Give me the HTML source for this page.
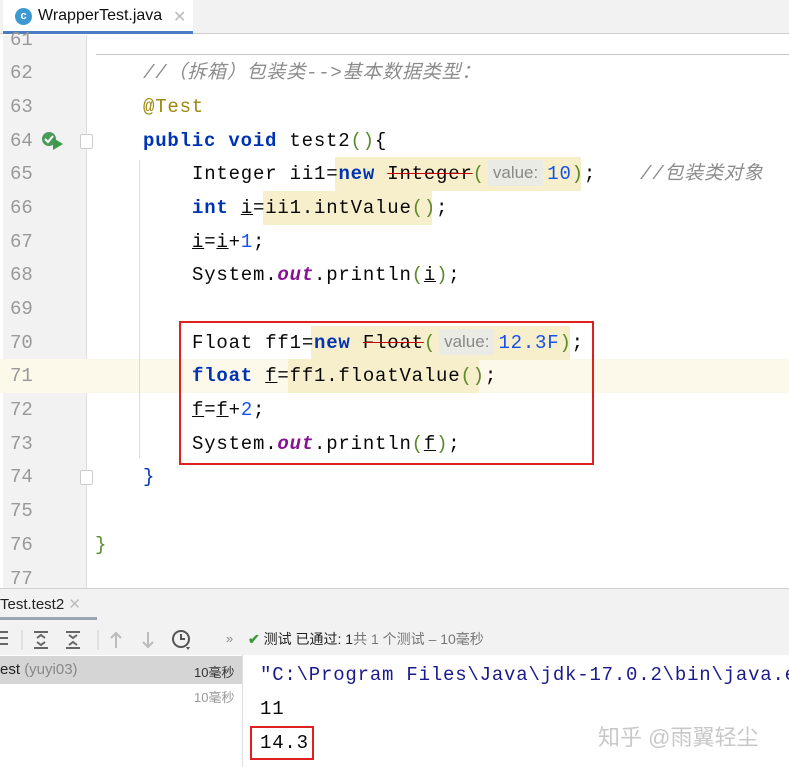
<!DOCTYPE html>
<html><head><meta charset="utf-8"><style>
*{margin:0;padding:0;box-sizing:border-box}
body{width:789px;height:767px;overflow:hidden;background:#fff;position:relative;font-family:"Liberation Sans","Noto Sans CJK SC",sans-serif}
.abs{position:absolute}
.m{font-family:"Liberation Mono","Noto Sans CJK SC",monospace;font-size:19px;letter-spacing:0.8px;white-space:pre;color:#080808}
.ln{position:absolute;left:10px;width:24px;font-family:"Liberation Mono",monospace;font-size:19px;color:#999;line-height:34px}
.code{position:absolute;line-height:34px}
.kw{color:#0033b3;font-weight:bold}
.num{color:#1750eb}
.par{color:#5b8a2a}
.it{color:#871094;font-style:italic;font-weight:bold}
.cm{color:#8c8c8c;font-style:italic}
.ann{color:#9e880d}
.u{text-decoration:underline}
.st{text-decoration:line-through;text-decoration-color:#c00}
.hint{display:inline-block;background:#ebebe5;color:#888;font-family:"Liberation Sans",sans-serif;font-size:17px;letter-spacing:0;padding:0 5px;margin:0 4px 0 3px;line-height:26px;vertical-align:1px}
.hl{position:absolute;background:#f7efcc;height:34px}
</style></head><body>
<div class="abs" style="left:0;top:0;width:789px;height:34px;background:#f2f2f2;border-bottom:1px solid #d0d0d0"></div>
<div class="abs" style="left:3px;top:0;width:190px;height:34px;background:#fff"></div>
<div class="abs" style="left:3px;top:31px;width:190px;height:3px;background:#4a7dbf"></div>
<div class="abs" style="left:15px;top:8px;width:17px;height:17px;border-radius:50%;background:#3d9ad1;color:#fff;font-size:11px;text-align:center;line-height:17px;font-weight:bold">c</div>
<div class="abs" style="left:38px;top:7px;font-size:16px;color:#111">WrapperTest.java</div>
<div class="abs" style="left:173px;top:7px;font-size:16px;color:#bbb">✕</div>
<div class="abs" style="left:3px;top:35px;width:84px;height:553px;background:#f2f2f2;border-right:1px solid #ddd"></div>
<div class="abs" style="left:0;top:359px;width:789px;height:34px;background:#fcf9ea"></div>
<div class="abs" style="left:96px;top:54px;width:693px;height:1px;background:#c8c8c8"></div>
<div class="abs" style="left:139px;top:160px;width:1px;height:298px;background:#ddd"></div>
<div class="abs" style="left:80px;top:134px;width:13px;height:15px;border:1px solid #ccc;border-radius:2px;background:#fff"></div>
<div class="abs" style="left:80px;top:470px;width:13px;height:15px;border:1px solid #ccc;border-radius:2px;background:#fff"></div>
<svg class="abs" style="left:40px;top:130px" width="26" height="22"><circle cx="9" cy="9" r="7" fill="#4a9a5a"/><path d="M5 9l3 3 5-6" stroke="#fff" stroke-width="2" fill="none"/><path d="M13 8l10 6-10 6z" fill="#3a9a4a"/></svg>
<div class="ln" style="top:23px">61</div>
<div class="ln" style="top:56px">62</div>
<div class="ln" style="top:90px">63</div>
<div class="ln" style="top:124px">64</div>
<div class="ln" style="top:157px">65</div>
<div class="ln" style="top:191px">66</div>
<div class="ln" style="top:225px">67</div>
<div class="ln" style="top:258px">68</div>
<div class="ln" style="top:292px">69</div>
<div class="ln" style="top:326px">70</div>
<div class="ln" style="top:359px">71</div>
<div class="ln" style="top:393px">72</div>
<div class="ln" style="top:427px">73</div>
<div class="ln" style="top:460px">74</div>
<div class="ln" style="top:494px">75</div>
<div class="ln" style="top:528px">76</div>
<div class="ln" style="top:562px">77</div>
<div class="hl" style="left:335px;top:157px;width:246px"></div>
<div class="hl" style="left:263px;top:191px;width:169px"></div>
<div class="hl" style="left:311px;top:326px;width:259px"></div>
<div class="hl" style="left:288px;top:359px;width:191px"></div>
<div class="code m" style="left:143px;top:56px"><span class="cm">//（拆箱）包装类--&gt;基本数据类型：</span></div>
<div class="code m ann" style="left:143px;top:90px">@Test</div>
<div class="code m" style="left:143px;top:124px"><span class="kw">public void</span> test2<span class="par">()</span>{</div>
<div class="code m" style="left:192px;top:157px">Integer ii1=<span class="kw">new</span> <span class="st">Integer</span><span class="par">(</span><span class="hint">value:</span><span class="num">10</span><span class="par">)</span>;</div>
<div class="code m" style="left:640px;top:157px"><span class="cm">//包装类对象</span></div>
<div class="code m" style="left:192px;top:191px"><span class="kw">int</span> <span class="u">i</span>=ii1.intValue<span class="par">()</span>;</div>
<div class="code m" style="left:192px;top:225px"><span class="u">i</span>=<span class="u">i</span>+<span class="num">1</span>;</div>
<div class="code m" style="left:192px;top:258px">System.<span class="it">out</span>.println<span class="par">(</span><span class="u">i</span><span class="par">)</span>;</div>
<div class="code m" style="left:192px;top:326px">Float ff1=<span class="kw">new</span> <span class="st">Float</span><span class="par">(</span><span class="hint">value:</span><span class="num">12.3F</span><span class="par">)</span>;</div>
<div class="code m" style="left:192px;top:359px"><span class="kw">float</span> <span class="u">f</span>=ff1.floatValue<span class="par">()</span>;</div>
<div class="code m" style="left:192px;top:393px"><span class="u">f</span>=<span class="u">f</span>+<span class="num">2</span>;</div>
<div class="code m" style="left:192px;top:427px">System.<span class="it">out</span>.println<span class="par">(</span><span class="u">f</span><span class="par">)</span>;</div>
<div class="code m" style="left:143px;top:460px;color:#0033b3">}</div>
<div class="code m" style="left:95px;top:528px;color:#5b8a2a">}</div>
<div class="abs" style="left:179px;top:321px;width:415px;height:144px;border:2px solid #e02020"></div>
<div class="abs" style="left:0;top:588px;width:789px;height:67px;background:#f2f2f2;border-top:1px solid #d0d0d0"></div>
<div class="abs" style="left:0;top:595px;font-size:15px;color:#222">Test.test2 <span style="color:#bbb">✕</span></div>
<div class="abs" style="left:0;top:617px;width:97px;height:3px;background:#9aa4b2"></div>
<svg class="abs" style="left:0;top:628px" width="200" height="24">
<path d="M0 4h8M0 10h8M0 16h8" stroke="#666" stroke-width="2"/>
<line x1="22" y1="2" x2="22" y2="22" stroke="#ccc"/>
<path d="M34 4h14M34 20h14M37 10l4-3 4 3M37 14l4 3 4-3" stroke="#666" stroke-width="2" fill="none"/>
<path d="M66 4h14M66 20h14M69 7l4 3 4-3M69 17l4-3 4 3" stroke="#666" stroke-width="2" fill="none"/>
<line x1="98" y1="2" x2="98" y2="22" stroke="#ccc"/>
<path d="M116 20V5M111 10l5-5 5 5" stroke="#bbb" stroke-width="2" fill="none"/>
<path d="M148 4v15M143 14l5 5 5-5" stroke="#bbb" stroke-width="2" fill="none"/>
</svg>
<svg class="abs" style="left:171px;top:628px" width="22" height="24"><circle cx="10" cy="11" r="8" stroke="#555" stroke-width="2" fill="none"/><path d="M10 6v5h4" stroke="#555" stroke-width="2" fill="none"/><path d="M15 19l4 0-2 3z" fill="#555"/></svg>
<div class="abs" style="left:226px;top:631px;font-size:13px;color:#888">»</div>
<div class="abs" style="left:248px;top:629px;font-size:14px;color:#222"><span style="color:#3a9a3a;font-weight:bold">✔</span> 测试 已通过: 1<span style="color:#777">共 1 个测试 – 10毫秒</span></div>
<div class="abs" style="left:0;top:656px;width:243px;height:28px;background:#d5d5d5"></div>
<div class="abs" style="left:0;top:661px;font-size:15px;color:#222">est <span style="color:#888">(yuyi03)</span></div>
<div class="abs" style="left:194px;top:662px;font-size:13px;color:#333">10毫秒</div>
<div class="abs" style="left:194px;top:687px;font-size:13px;color:#999">10毫秒</div>
<div class="abs" style="left:242px;top:655px;width:1px;height:112px;background:#e0e0e0"></div>
<div class="abs m" style="left:260px;top:664px;color:#1a1a8a">"C:\Program Files\Java\jdk-17.0.2\bin\java.e</div>
<div class="abs m" style="left:260px;top:698px">11</div>
<div class="abs m" style="left:260px;top:732px">14.3</div>
<div class="abs" style="left:250px;top:726px;width:64px;height:34px;border:2px solid #e02020"></div>
<div class="abs" style="left:598px;top:720px;font-size:22px;color:#c8c8c8">知乎 @雨翼轻尘</div>
</body></html>
